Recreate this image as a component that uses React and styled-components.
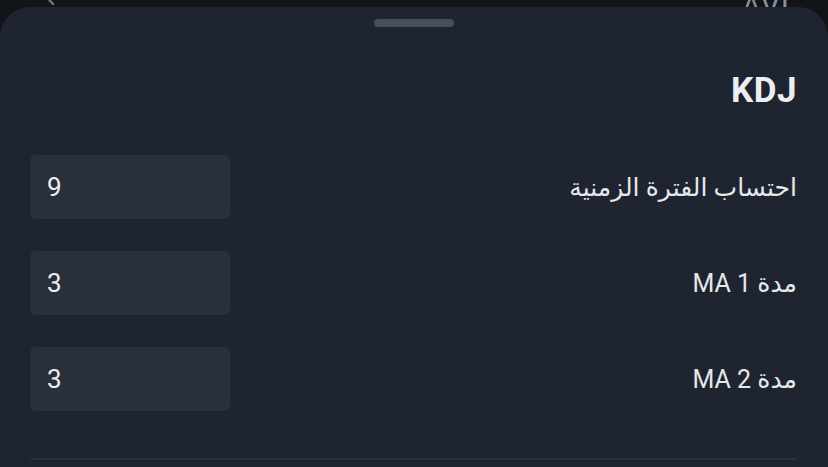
import React from 'react';
import styled, { createGlobalStyle } from 'styled-components';

const GlobalStyle = createGlobalStyle`
  html, body {
    margin: 0;
    padding: 0;
    background: #111419;
    font-family: Roboto, "DejaVu Sans", sans-serif;
  }
`;

const Page = styled.div`
  width: 828px;
  height: 467px;
  display: flex;
  flex-direction: column;
  overflow: hidden;
  background: #111419;
`;

const Backdrop = styled.div`
  height: 7px;
  flex-shrink: 0;
  overflow: hidden;
  display: flex;
  align-items: flex-end;
  justify-content: space-between;
  padding: 0 38px 0 42px;
`;

const BackIcon = styled.svg`
  width: 14px;
  height: 22px;
  margin-bottom: 1px;
  color: #6b717b;
`;

const BackdropTitle = styled.span`
  font-size: 30px;
  line-height: 30px;
  color: #8b9099;
  margin-bottom: -14px;
  letter-spacing: 1px;
`;

const Sheet = styled.div`
  flex: 1;
  background: #1f2530;
  border-radius: 30px 30px 0 0;
  padding: 12px 31px 0 30px;
  display: flex;
  flex-direction: column;
`;

const Handle = styled.div`
  width: 80px;
  height: 8px;
  border-radius: 4px;
  background: #474f5c;
  align-self: center;
`;

const Title = styled.h2`
  margin: 44px 0 0;
  font-size: 35px;
  line-height: 40px;
  font-weight: 700;
  color: #eceef1;
  text-align: right;
  letter-spacing: 0.5px;
`;

const Fields = styled.div`
  margin-top: 44px;
  display: flex;
  flex-direction: column;
  gap: 32px;
`;

const Row = styled.div`
  display: flex;
  align-items: center;
  justify-content: space-between;
  height: 64px;
`;

const Label = styled.span`
  font-size: 25px;
  color: #e6e8eb;
`;

const Field = styled.input`
  width: 200px;
  height: 64px;
  box-sizing: border-box;
  border: none;
  outline: none;
  border-radius: 6px;
  background: #29303b;
  padding: 0 17px;
  font-family: Roboto, "DejaVu Sans", sans-serif;
  font-size: 26px;
  color: #eceef1;
  direction: ltr;
  text-align: left;
`;

const Divider = styled.div`
  margin-top: 47px;
  height: 2px;
  background: #2b313c;
  border-radius: 1px;
`;

const params = [
  { label: 'احتساب الفترة الزمنية', value: '9' },
  { label: 'مدة MA 1', value: '3' },
  { label: 'مدة MA 2', value: '3' },
];

const App = () => (
  <>
    <GlobalStyle />
    <Page>
      <Backdrop>
        <BackIcon viewBox="0 0 14 22" fill="none">
          <path d="M11 2 L3 11 L11 20" stroke="currentColor" strokeWidth="2.5" strokeLinecap="round" strokeLinejoin="round" />
        </BackIcon>
        <BackdropTitle>AVI</BackdropTitle>
      </Backdrop>
      <Sheet>
        <Handle />
        <Title>KDJ</Title>
        <Fields>
          {params.map((p) => (
            <Row key={p.label} dir="rtl">
              <Label>{p.label}</Label>
              <Field readOnly defaultValue={p.value} />
            </Row>
          ))}
        </Fields>
        <Divider />
      </Sheet>
    </Page>
  </>
);

export default App;
